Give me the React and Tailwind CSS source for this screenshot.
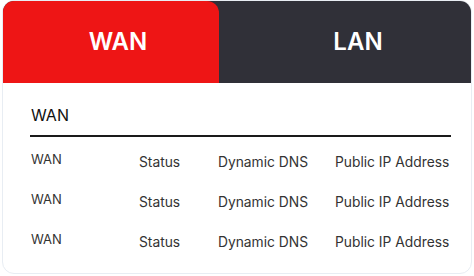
export default function App() {
  const rows = [0, 1, 2];
  return (
    <div className="w-[474px] h-[276px] bg-white overflow-hidden" style={{ fontFamily: "Inter, 'Noto Sans', sans-serif" }}>
      <div className="mx-[2px] h-[274px] rounded-[12px] border border-[#e8edf3] overflow-hidden flex flex-col">
        <div className="flex h-[82px] bg-[#303038]">
          <div className="w-[216px] bg-[#ee1515] rounded-tr-[12px] flex items-center justify-center text-white text-[24px] font-semibold pl-[14px]">WAN</div>
          <div className="flex-1 flex items-center justify-center text-white text-[24px] font-semibold pl-[26px]">LAN</div>
        </div>
        <div className="px-[27px] pt-[21px]">
          <div className="text-[16px] text-[#111] leading-[22px] pl-[1px]">WAN</div>
          <div className="mt-[9px] h-[2px] bg-[#1a1a1a] w-[421px]" />
          <div className="flex flex-col">
            {rows.map((r) => (
              <div key={r} className="flex h-[40px] items-center text-[13.8px] text-[#333] leading-none pt-[12px] whitespace-nowrap">
                <div className="w-[109px] shrink-0 text-[13px] -mt-[8px] pl-[1px]">WAN</div>
                <div className="w-[79px] shrink-0">Status</div>
                <div className="w-[117px] shrink-0">Dynamic DNS</div>
                <div className="shrink-0">Public IP Address</div>
              </div>
            ))}
          </div>
        </div>
      </div>
    </div>
  );
}
